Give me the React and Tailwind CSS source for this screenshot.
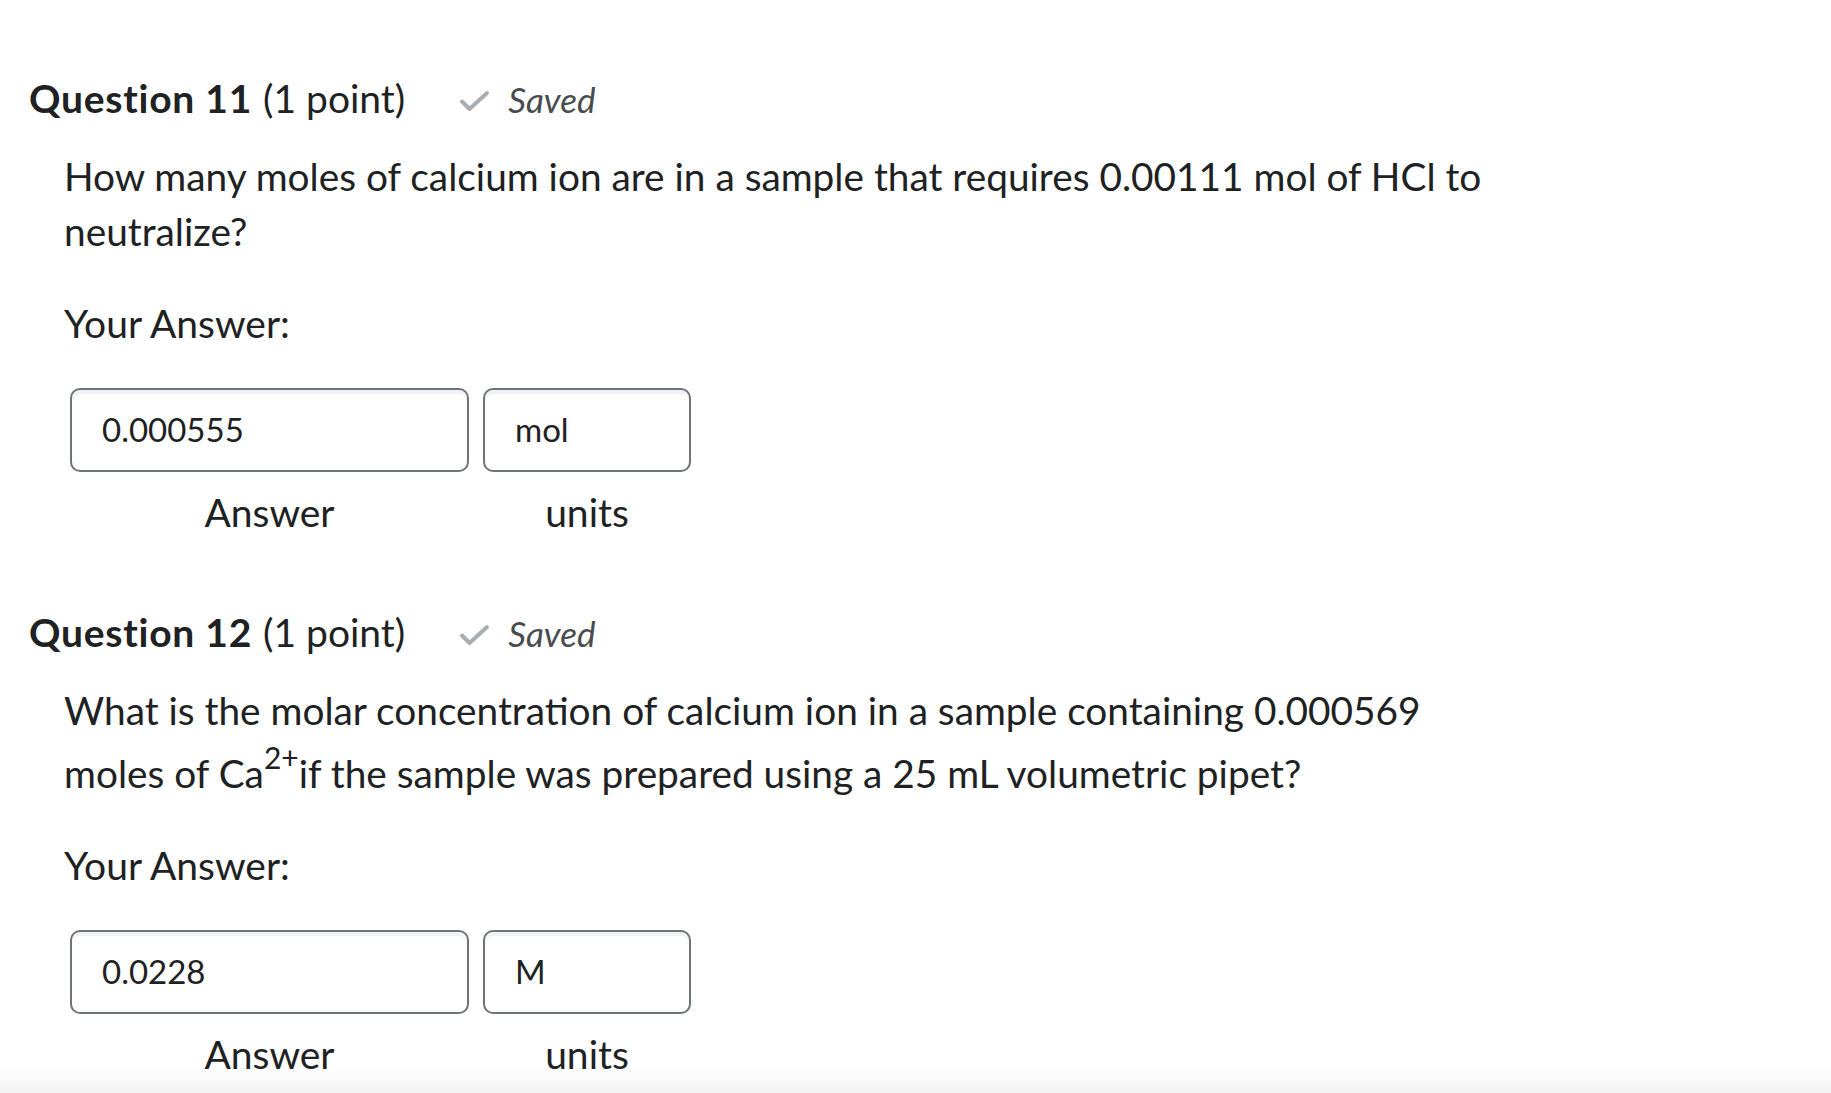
import React from 'react';

// Gray check used next to "Saved"
const SavedBadge = () => (
  <span className="flex items-baseline ml-[53px] text-[#494c4e]">
    <svg width="32" height="24" viewBox="0 0 32 24" className="self-center mr-[18px] mt-[4px]">
      <path d="M4 12.5 L11.5 20 L29 4" fill="none" stroke="#a8adb1" strokeWidth="4" strokeLinecap="round" strokeLinejoin="round" />
    </svg>
    <span className="italic text-[35px]">Saved</span>
  </span>
);

const AnswerField = ({ value, label, width }) => (
  <div className="flex flex-col items-center" style={{ width }}>
    <div className="w-full h-[84px] border-2 border-[#6f7377] rounded-[10px] bg-white shadow-[inset_0_4px_0_0_rgba(185,194,208,0.22)] flex items-center pl-[30px] text-[33px] text-[#202122]">
      {value}
    </div>
    <span className="mt-[17px] text-[39px] leading-[46px]">{label}</span>
  </div>
);

const Question = ({ number, children, answer, unit, last }) => (
  <section className={last ? '' : 'mb-[74px]'}>
    <div className="flex items-baseline text-[39px] leading-[46px] [font-variant-ligatures:none]">
      <span className="font-bold tracking-[0.75px]">Question {number}</span>
      <span className="ml-[11px]">(1 point)</span>
      <SavedBadge />
    </div>
    <div className="pl-[35px]">
      <div className="mt-[27px] text-[38.8px] leading-[55px]">{children}</div>
      <p className="mt-[37px] text-[39px] leading-[55px]">Your Answer:</p>
      <div className="flex gap-[14px] ml-[6px] mt-[37px]">
        <AnswerField value={answer} label="Answer" width={399} />
        <AnswerField value={unit} label="units" width={208} />
      </div>
    </div>
  </section>
);

export default function App() {
  return (
    <div className="relative min-h-screen bg-white font-['Lato','Liberation_Sans',sans-serif] text-[#202122] pl-[29px] pt-[75px] overflow-hidden">
      <Question number={11} answer="0.000555" unit="mol">
        <p>How many moles of calcium ion are in a sample that requires 0.00111 mol of HCl to</p>
        <p>neutralize?</p>
      </Question>
      <Question number={12} answer="0.0228" unit="M" last>
        <p>What is the molar concentration of calcium ion in a sample containing 0.000569</p>
        <p className="pt-[8px]">
          moles of Ca<sup className="text-[30px] top-[-0.65em]">2+</sup>if the sample was prepared using a 25 mL volumetric pipet?
        </p>
      </Question>
      <div className="pointer-events-none fixed left-0 right-0 bottom-0 h-[26px] bg-gradient-to-b from-[rgba(0,0,0,0)] to-[rgba(0,0,0,0.05)]" />
    </div>
  );
}
